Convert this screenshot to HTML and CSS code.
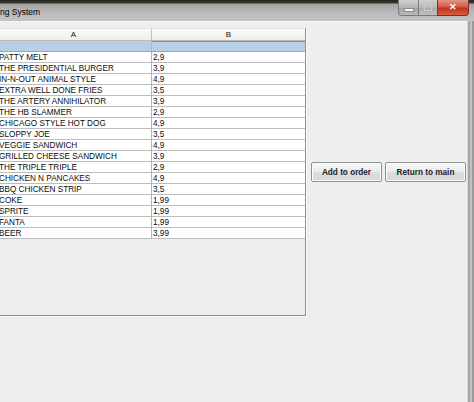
FILE: index.html
```html
<!DOCTYPE html>
<html lang="en">
<head>
    <meta charset="UTF-8">
    <title>Ordering System</title>
    <link rel="stylesheet" href="styles.css">
</head>
<body>

    <div class="window">
        <!-- Title Bar -->
        <div class="titlebar">
            <span class="title">ng System</span>
            <div class="controls">
                <span class="ctl ctl-min"><i></i></span>
                <span class="ctl ctl-max"><i></i></span>
                <span class="ctl ctl-close">&#x2715;</span>
            </div>
        </div>

        <div class="frame">
            <div class="content">
                <div class="scrollpane">
                    <div class="thead">
                        <div class="th col-a">A</div>
                        <div class="th col-b">B</div>
                    </div>
                    <div class="row selected">
                        <div class="cell col-a"></div>
                        <div class="cell col-b focus"></div>
                    </div>
                    <div class="row"><div class="cell col-a">PATTY MELT</div><div class="cell col-b">2,9</div></div>
                    <div class="row"><div class="cell col-a">THE PRESIDENTIAL BURGER</div><div class="cell col-b">3,9</div></div>
                    <div class="row"><div class="cell col-a">IN-N-OUT ANIMAL STYLE</div><div class="cell col-b">4,9</div></div>
                    <div class="row"><div class="cell col-a">EXTRA WELL DONE FRIES</div><div class="cell col-b">3,5</div></div>
                    <div class="row"><div class="cell col-a">THE ARTERY ANNIHILATOR</div><div class="cell col-b">3,9</div></div>
                    <div class="row"><div class="cell col-a">THE HB SLAMMER</div><div class="cell col-b">2,9</div></div>
                    <div class="row"><div class="cell col-a">CHICAGO STYLE HOT DOG</div><div class="cell col-b">4,9</div></div>
                    <div class="row"><div class="cell col-a">SLOPPY JOE</div><div class="cell col-b">3,5</div></div>
                    <div class="row"><div class="cell col-a">VEGGIE SANDWICH</div><div class="cell col-b">4,9</div></div>
                    <div class="row"><div class="cell col-a">GRILLED CHEESE SANDWICH</div><div class="cell col-b">3,9</div></div>
                    <div class="row"><div class="cell col-a">THE TRIPLE TRIPLE</div><div class="cell col-b">2,9</div></div>
                    <div class="row"><div class="cell col-a">CHICKEN N PANCAKES</div><div class="cell col-b">4,9</div></div>
                    <div class="row"><div class="cell col-a">BBQ CHICKEN STRIP</div><div class="cell col-b">3,5</div></div>
                    <div class="row"><div class="cell col-a">COKE</div><div class="cell col-b">1,99</div></div>
                    <div class="row"><div class="cell col-a">SPRITE</div><div class="cell col-b">1,99</div></div>
                    <div class="row"><div class="cell col-a">FANTA</div><div class="cell col-b">1,99</div></div>
                    <div class="row"><div class="cell col-a">BEER</div><div class="cell col-b">3,99</div></div>
                </div>

                <div class="actions">
                    <button class="btn btn-add">Add to order</button>
                    <button class="btn btn-return">Return to main</button>
                </div>
            </div>
            <div class="border-right"></div>
        </div>
    </div>

</body>
</html>
```

FILE: styles.css
```css
body {
    margin: 0;
    width: 474px;
    height: 402px;
    overflow: hidden;
    font-family: "Liberation Sans", Arial, sans-serif;
    background-color: #eeeeee;
}

.window {
    display: flex;
    flex-direction: column;
    height: 402px;
}

/* Title bar */
.titlebar {
    height: 21px;
    display: flex;
    align-items: flex-start;
    justify-content: space-between;
    background: linear-gradient(#26251c 0, #3a3a30 3px, #a3a3a3 4px, #b9b9b9 12px, #c4c4c4 21px);
    flex-shrink: 0;
}
.title {
    font-size: 8.5px;
    color: #000;
    margin-top: 7px;
    margin-left: 0;
    white-space: nowrap;
}
.controls {
    display: flex;
    margin-right: 5px;
    margin-top: 0;
}
.ctl {
    height: 16px;
    box-sizing: border-box;
    border: 1px solid #7b7b7b;
    border-top: none;
    display: flex;
    align-items: center;
    justify-content: center;
}
.ctl-min {
    width: 20px;
    border-radius: 0 0 0 4px;
    border-right: none;
    background: linear-gradient(#cfcfcf, #b3b3b3 50%, #a2a2a2 51%, #b9b9b9);
}
.ctl-min i {
    width: 8px;
    height: 2px;
    margin-top: 4px;
    background: #f4f4f4;
    box-shadow: 0 0 0 1px #8a8a8a;
}
.ctl-max {
    width: 19px;
    border-right: none;
    background: linear-gradient(#cfcfcf, #b9b9b9 50%, #a9a9a9 51%, #bfbfbf);
}
.ctl-max i {
    width: 6px;
    height: 5px;
    border: 1px solid #c9c9c9;
}
.ctl-close {
    width: 32px;
    border-radius: 0 0 4px 0;
    border-color: #7a3128;
    background: linear-gradient(#e39686, #d35c46 45%, #c3341f 55%, #d65a40);
    color: #fff;
    font-size: 8.5px;
    font-weight: bold;
    line-height: 1;
}

/* Window body */
.frame {
    flex: 1;
    display: flex;
}
.content {
    width: 467px;
    padding-top: 6px;
    display: flex;
    align-items: center;
    align-self: flex-start;
    border-top: 1px solid #f6f6f6;
    box-sizing: border-box;
}
.border-right {
    width: 7px;
    background: linear-gradient(to right, #dadada 0 1px, #a5a5a5 1px 3px, #c2c2c2 3px 5px, #9a9a9a 5px 7px);
}

/* Table */
.scrollpane {
    width: 310px;
    height: 288px;
    margin-left: -4px;
    box-sizing: border-box;
    border-right: 1px solid #8f8f8f;
    border-bottom: 1px solid #8f8f8f;
    box-shadow: 1px 1px 0 #fbfbfb;
    background-color: #eeeeee;
    flex-shrink: 0;
}
.thead, .row {
    display: flex;
}
.col-a {
    width: 156px;
    box-sizing: border-box;
    border-right: 1px solid #b5b5b5;
}
.col-b {
    width: 153px;
    box-sizing: border-box;
}
.th {
    height: 13px;
    font-size: 8px;
    line-height: 12px;
    text-align: center;
    color: #111;
    background: linear-gradient(#fbfbfb, #eeeeee);
    border-top: 1px solid #e2e2e2;
    border-bottom: 1px solid #b9b9b9;
}
.th.col-a {
    border-right: 1px solid #c3c3c3;
}
.row {
    height: 11px;
    background-color: #fff;
}
.cell {
    height: 11px;
    font-size: 8.2px;
    line-height: 11px;
    color: #0c0c0c;
    border-bottom: 1px solid #bdbdbd;
    white-space: nowrap;
    overflow: hidden;
}
.cell.col-a {
    padding-left: 3px;
}
.cell.col-b {
    padding-left: 1px;
}
.row.selected {
    background-color: #b8cfe5;
}
.row.selected .cell {
    border-bottom-color: #8ea6c4;
}
.cell.focus {
    border: 1px solid #7891b5;
    border-left: none;
    border-right: none;
}

/* Buttons */
.actions {
    display: flex;
    gap: 3px;
    margin-left: 5px;
}
.btn {
    height: 20px;
    padding: 0;
    font-family: "Liberation Sans", Arial, sans-serif;
    font-size: 8.2px;
    font-weight: bold;
    color: #1c1c1c;
    border: 1px solid #8e8f8f;
    border-radius: 2px;
    background: linear-gradient(#f7f7f7, #eaebec 50%, #dcdee1 51%, #d4d6da);
    box-shadow: inset 0 0 0 1px #fcfcfc;
}
.btn-add {
    width: 71px;
}
.btn-return {
    width: 81px;
}
```
